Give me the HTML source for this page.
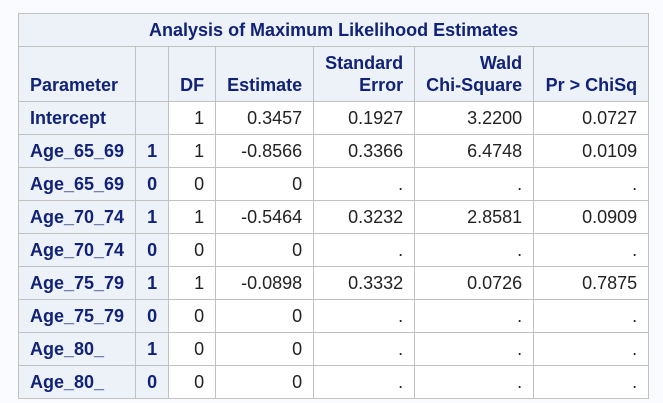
<!DOCTYPE html>
<html><head><style>
html,body{margin:0;padding:0;background:#f9fbfe;width:663px;height:403px;overflow:hidden}
table{position:absolute;left:18px;top:13px;border-collapse:collapse;font-family:"Liberation Sans",Arial,sans-serif;font-size:18px;table-layout:fixed}
td,th{border:1px solid #c1c1c1;padding:0 11px;height:33px;box-sizing:border-box;white-space:nowrap}
th{background:#edf2f9;color:#112277;font-weight:bold}
td{background:#fff;color:#222;text-align:right}
td.h{background:#edf2f9;color:#112277;font-weight:bold;text-align:left}
.title th{height:33px;text-align:center}
.hd th{height:55px;vertical-align:bottom;padding-bottom:5px;text-align:right;line-height:22px}
.hd th.l{text-align:left}
</style></head><body>
<table>
<colgroup><col style="width:117px"><col style="width:33px"><col style="width:47px"><col style="width:98px"><col style="width:101px"><col style="width:119px"><col style="width:115px"></colgroup>
<tr class="title"><th colspan="7">Analysis of Maximum Likelihood Estimates</th></tr>
<tr class="hd"><th class="l">Parameter</th><th></th><th>DF</th><th>Estimate</th><th>Standard<br>Error</th><th>Wald<br>Chi-Square</th><th>Pr &gt; ChiSq</th></tr>
<tr><td class="h">Intercept</td><td class="h"></td><td>1</td><td>0.3457</td><td>0.1927</td><td>3.2200</td><td>0.0727</td></tr>
<tr><td class="h">Age_65_69</td><td class="h">1</td><td>1</td><td>-0.8566</td><td>0.3366</td><td>6.4748</td><td>0.0109</td></tr>
<tr><td class="h">Age_65_69</td><td class="h">0</td><td>0</td><td>0</td><td>.</td><td>.</td><td>.</td></tr>
<tr><td class="h">Age_70_74</td><td class="h">1</td><td>1</td><td>-0.5464</td><td>0.3232</td><td>2.8581</td><td>0.0909</td></tr>
<tr><td class="h">Age_70_74</td><td class="h">0</td><td>0</td><td>0</td><td>.</td><td>.</td><td>.</td></tr>
<tr><td class="h">Age_75_79</td><td class="h">1</td><td>1</td><td>-0.0898</td><td>0.3332</td><td>0.0726</td><td>0.7875</td></tr>
<tr><td class="h">Age_75_79</td><td class="h">0</td><td>0</td><td>0</td><td>.</td><td>.</td><td>.</td></tr>
<tr><td class="h">Age_80_</td><td class="h">1</td><td>0</td><td>0</td><td>.</td><td>.</td><td>.</td></tr>
<tr><td class="h">Age_80_</td><td class="h">0</td><td>0</td><td>0</td><td>.</td><td>.</td><td>.</td></tr>
</table>
</body></html>
